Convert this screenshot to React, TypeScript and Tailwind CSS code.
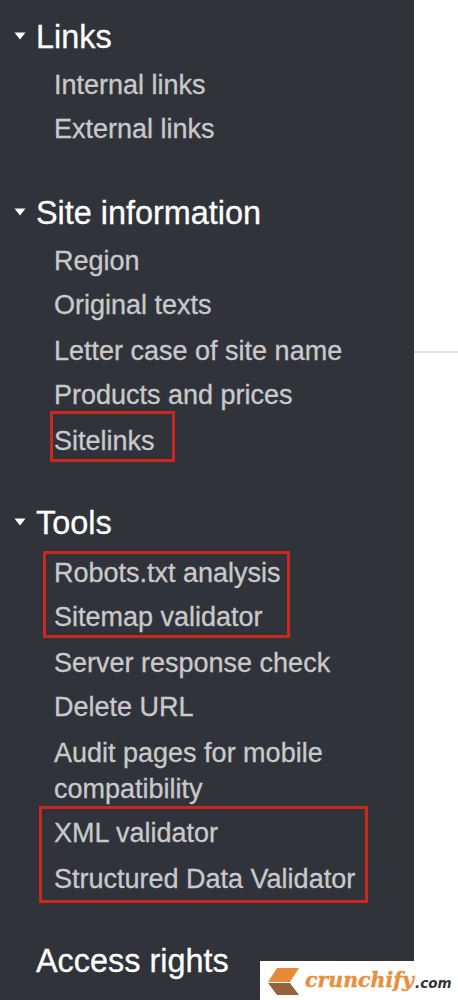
import React from 'react';

// Triangle marker beside the section headings
const Caret = () => (
  <svg width="12" height="8" viewBox="0 0 12 8" className="absolute left-[14px] top-[16px]">
    <path d="M0.5 0.5 L11.5 0.5 L6 7.5 Z" fill="#ffffff" />
  </svg>
);

const Heading: React.FC<{ label: string; caret?: boolean; className?: string }> = ({ label, caret = true, className = '' }) => (
  <div className={`relative pl-[36px] h-[44px] leading-[42px] text-[32.4px] text-white [-webkit-text-stroke:0.3px_#ffffff] ${className}`}>
    {caret && <Caret />}
    {label}
  </div>
);

const Item: React.FC<{ label: string; className?: string }> = ({ label, className = 'h-[44px]' }) => (
  <div className={`pl-[54px] leading-[44px] text-[27px] text-[#c9c9cb] [-webkit-text-stroke:0.3px_#c9c9cb] ${className}`}>{label}</div>
);

const CrunchifyLogo = () => (
  <div className="absolute right-0 bottom-0 w-[198px] h-[39px] bg-white flex items-center pl-[8px]">
    <svg width="31" height="27" viewBox="0 0 31 27" className="shrink-0 mt-[2px]">
      <path d="M9 0 L31 0 L22 14 L0 14 Z" fill="#e8893a" />
      <path d="M0 15 L22 15 L31 27 L9 27 Z" fill="#96623a" />
    </svg>
    <span className="ml-[6px] text-[20.5px] font-bold italic text-[#e8913c] [-webkit-text-stroke:0.4px_#e8913c] font-['DejaVu_Serif',serif]">crunchify</span>
    <span className="mt-[6px] ml-[1px] text-[13.5px] font-bold italic text-[#333333] font-['DejaVu_Sans',sans-serif]">.com</span>
  </div>
);

export default function App() {
  return (
    <div className="relative flex w-[458px] h-[1000px] overflow-hidden bg-white font-['Liberation_Sans',Arial,sans-serif]">
      <aside className="w-[414px] shrink-0 bg-[#30343a] pt-[16px]">
        <section>
          <Heading label="Links" />
          <div className="pt-[3px]">
            <Item label="Internal links" />
            <Item label="External links" />
          </div>
        </section>

        <section className="mt-[41px]">
          <Heading label="Site information" />
          <div className="pt-[3px]">
            <Item label="Region" />
            <Item label="Original texts" className="h-[46px]" />
            <Item label="Letter case of site name" />
            <Item label="Products and prices" className="h-[46px]" />
            <div className="relative">
              <Item label="Sitelinks" />
              <div className="absolute left-[50px] top-[-8px] w-[125px] h-[51px] border-[3px] border-[#c8281e]" />
            </div>
          </div>
        </section>

        <section className="mt-[39px]">
          <Heading label="Tools" />
          <div className="pt-[5px]">
            <div className="relative">
              <Item label="Robots.txt analysis" />
              <Item label="Sitemap validator" className="h-[46px]" />
              <div className="absolute left-[43px] top-0 w-[247px] h-[87px] border-[3px] border-[#c8281e]" />
            </div>
            <Item label="Server response check" />
            <Item label="Delete URL" className="h-[46px]" />
            <Item label="Audit pages for mobile" className="h-[36px]" />
            <Item label="compatibility" />
            <div className="relative">
              <Item label="XML validator" className="h-[46px]" />
              <Item label="Structured Data Validator" />
              <div className="absolute left-[39px] top-[-5px] w-[329px] h-[97px] border-[3px] border-[#c8281e]" />
            </div>
          </div>
        </section>

        <Heading label="Access rights" caret={false} className="mt-[39px]" />
      </aside>

      <main className="flex-1 pt-[351px]">
        <div className="h-[2px] bg-[#e2e2e2]" />
      </main>

      <CrunchifyLogo />
    </div>
  );
}
